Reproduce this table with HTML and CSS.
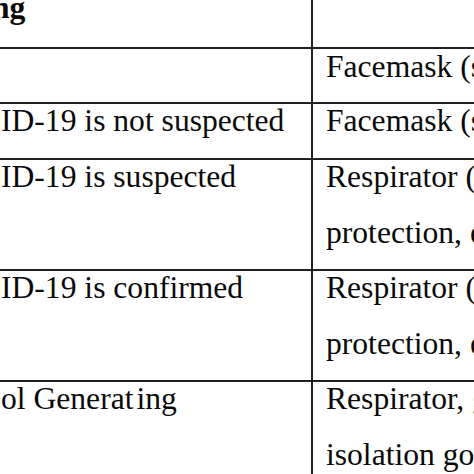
FILE: index.html
```html
<!DOCTYPE html>
<html>
<head>
<meta charset="utf-8">
<link rel="stylesheet" href="styles.css">
</head>
<body>
<div class="table">
  <div class="cell left head"><div class="line">ng</div></div>
  <div class="cell right head"></div>

  <div class="cell left"></div>
  <div class="cell right r1"><div class="line">Facemask (surgical mask)</div></div>

  <div class="cell left"><div class="line">ID-19 is not suspected</div></div>
  <div class="cell right"><div class="line">Facemask (surgical mask)</div></div>

  <div class="cell left"><div class="line">ID-19 is suspected</div></div>
  <div class="cell right"><div class="line">Respirator (N95 or FFP2)</div><div class="line">protection, eye protection</div></div>

  <div class="cell left"><div class="line">ID-19 is confirmed</div></div>
  <div class="cell right"><div class="line">Respirator (N95 or FFP2)</div><div class="line">protection, eye protection</div></div>

  <div class="cell left"><div class="line">ol Generat<span class="gap">ing</span></div></div>
  <div class="cell right"><div class="line">Respirator, gloves</div><div class="line">isolation gown</div></div>
</div>
</body>
</html>
```

FILE: styles.css
```css
html, body {
  margin: 0;
  padding: 0;
  background: #ffffff;
  width: 474px;
  height: 474px;
  overflow: hidden;
}

.table {
  display: grid;
  grid-template-columns: 313px 420px;
  grid-template-rows: 49px 55px 56px 111px 111px 111px;
  font-family: "Liberation Serif", "Times New Roman", serif;
  font-size: 31.6px;
  color: #0a0a0a;
}

.cell {
  box-sizing: border-box;
  border-bottom: 2px solid #202020;
  display: flex;
  flex-direction: column;
  gap: 22px;
  overflow: hidden;
  white-space: nowrap;
}

.left {
  border-right: 2px solid #202020;
  padding-left: 1px;
}

.right {
  padding-left: 13px;
}

.r1 {
  padding-top: 1px;
}

.line {
  line-height: 34px;
}

.gap {
  margin-left: 3px;
}

.head .line {
  font-weight: bold;
  line-height: 16px;
  margin-left: -9px;
}
```
